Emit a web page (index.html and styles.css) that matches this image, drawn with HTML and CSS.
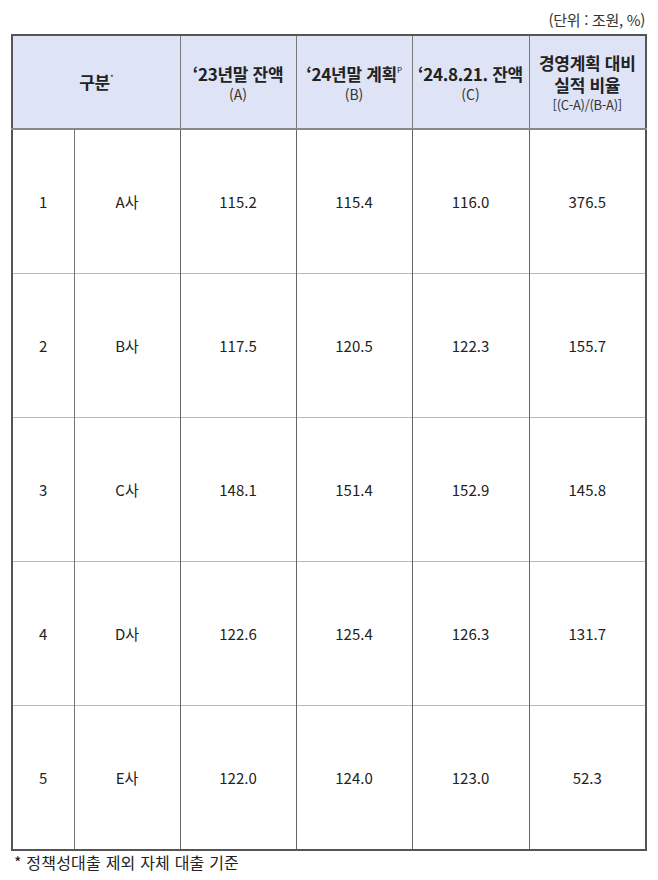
FILE: index.html
```html
<!DOCTYPE html>
<html lang="ko">
<head>
<meta charset="utf-8">
<link rel="stylesheet" href="styles.css">
</head>
<body>
<div class="page">
  <div class="unit">(단위 : 조원, %)</div>
  <table class="tbl">
    <colgroup>
      <col class="c1"><col class="c2"><col class="c3"><col class="c4"><col class="c5"><col class="c6">
    </colgroup>
    <thead>
      <tr>
        <th colspan="2"><span class="h">구분<sup>*</sup></span></th>
        <th><span class="h">‘23년말 잔액</span><span class="s">(A)</span></th>
        <th><span class="h">‘24년말 계획<sup>P</sup></span><span class="s">(B)</span></th>
        <th><span class="h">‘24.8.21. 잔액</span><span class="s">(C)</span></th>
        <th><span class="h">경영계획 대비</span><span class="h">실적 비율</span><span class="s sm">[(C-A)/(B-A)]</span></th>
      </tr>
    </thead>
    <tbody>
      <tr><td>1</td><td>A사</td><td>115.2</td><td>115.4</td><td>116.0</td><td>376.5</td></tr>
      <tr><td>2</td><td>B사</td><td>117.5</td><td>120.5</td><td>122.3</td><td>155.7</td></tr>
      <tr><td>3</td><td>C사</td><td>148.1</td><td>151.4</td><td>152.9</td><td>145.8</td></tr>
      <tr><td>4</td><td>D사</td><td>122.6</td><td>125.4</td><td>126.3</td><td>131.7</td></tr>
      <tr><td>5</td><td>E사</td><td>122.0</td><td>124.0</td><td>123.0</td><td>52.3</td></tr>
    </tbody>
  </table>
  <div class="note">* 정책성대출 제외 자체 대출 기준</div>
</div>
</body>
</html>
```
FILE: styles.css
```css
html, body {
  margin: 0;
  padding: 0;
  background: #ffffff;
}
body {
  font-family: "Noto Sans CJK KR", "Noto Sans", "Liberation Sans", sans-serif;
  color: #222222;
}
.page {
  width: 658px;
  padding: 9px 13px 0 11px;
  box-sizing: border-box;
}
.unit {
  text-align: right;
  font-size: 15px;
  line-height: 22px;
  height: 25px;
  color: #333;
  letter-spacing: -0.3px;
}
.tbl {
  width: 634px;
  border-collapse: collapse;
  table-layout: fixed;
  border: 2px solid #555555;
}
.c1 { width: 62px; }
.c2 { width: 106px; }
.c3 { width: 116px; }
.c4 { width: 116px; }
.c5 { width: 117px; }
.c6 { width: 117px; }
.tbl th {
  background: #dfe3f6;
  height: 92px;
  padding: 0;
  border-left: 1px solid #777;
  border-bottom: 2px solid #888;
  text-align: center;
  vertical-align: middle;
  font-weight: normal;
}
.tbl th:first-child { border-left: none; }
.h {
  display: block;
  font-weight: bold;
  font-size: 17px;
  line-height: 22px;
  letter-spacing: -0.3px;
  color: #222;
  white-space: nowrap;
}
.h sup {
  font-size: 8px;
  vertical-align: 8px;
  line-height: 0;
  font-weight: normal;
}
.s {
  display: block;
  font-size: 14px;
  line-height: 16px;
  margin-top: 1px;
  color: #333;
}
.s.sm { font-size: 13px; letter-spacing: -0.3px; }
.tbl td {
  height: 143px;
  padding: 0;
  text-align: center;
  vertical-align: middle;
  font-size: 15px;
  border-left: 1px solid #666;
  border-top: 1px solid #bbb;
  color: #222;
}
.tbl td:first-child { border-left: none; }
.tbl td:nth-child(2) { border-left: 1px solid #777; }
.note {
  font-size: 16px;
  line-height: 22px;
  margin-top: 0;
  padding-left: 3px;
  color: #222;
  letter-spacing: 0.2px;
}
```
